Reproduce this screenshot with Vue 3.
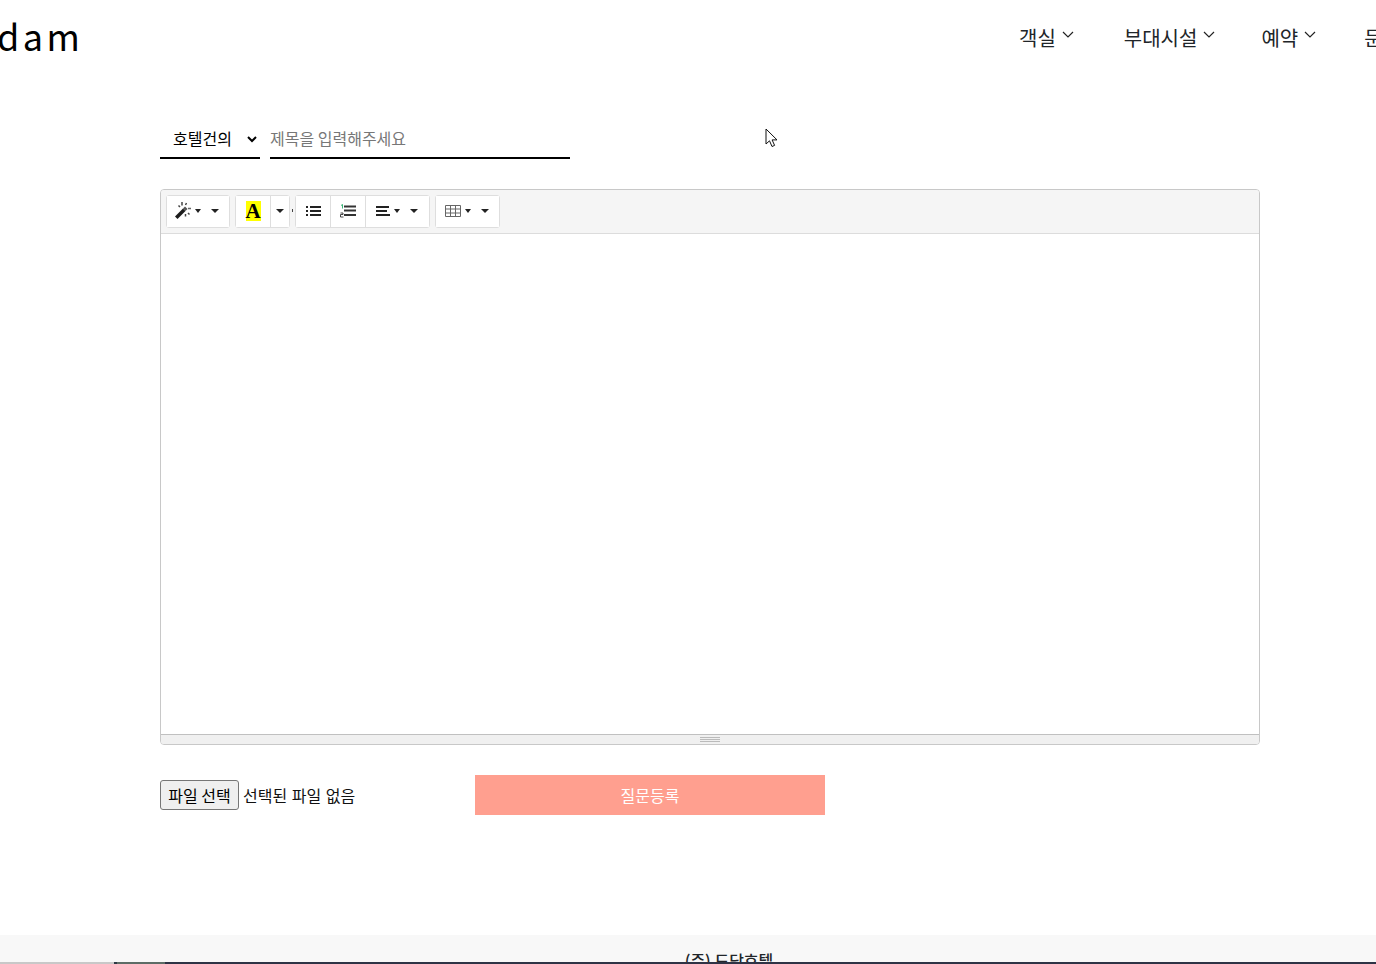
<script setup>
const nav = [
  { label: '객실', gap: 50 },
  { label: '부대시설', gap: 46 },
  { label: '예약', gap: 48 },
]
</script>

<template>
  <div class="page">
    <header class="header">
      <div class="logo">dam</div>
      <nav class="nav">
        <a v-for="item in nav" :key="item.label" class="nav-item" :style="{ marginRight: item.gap + 'px' }">
          <span>{{ item.label }}</span>
          <svg class="chev" width="12" height="7" viewBox="0 0 12 7"><path d="M1 1l5 5 5-5" fill="none" stroke="#222" stroke-width="1.2" /></svg>
        </a>
        <a class="nav-item">문의</a>
      </nav>
    </header>

    <main class="main">
      <div class="title-row">
        <select class="kind">
          <option>호텔건의</option>
        </select>
        <input class="title" type="text" placeholder="제목을 입력해주세요" />
      </div>

      <section class="editor">
        <div class="toolbar">
          <div class="group">
            <button class="tb w64 p8">
              <svg width="16" height="17" viewBox="0 0 16 17">
                <path d="M0 14.500L8 6.500l2.500 2.500L2.500 17z" fill="#1c1c1c" />
                <path d="M8 6.500l2-2 2.500 2.500-2 2z" fill="#555" />
                <path d="M7 0v3.500M3.500 3.500l1.500 1.500M11.500 1l-1 2M13 11l1.500 1.500M10.500 12v2.500" stroke="#444" stroke-width="1.500" />
                <path d="M13 6.500h3" stroke="#666" stroke-width="1.500" />
              </svg>
              <i class="caret small"></i>
              <i class="caret ml"></i>
            </button>
          </div>
          <div class="group">
            <button class="tb w35"><span class="hl">A</span></button>
            <button class="tb w19"><i class="caret"></i></button>
          </div>
          <span class="stray"></span>
          <div class="group">
            <button class="tb w35">
              <svg width="15" height="12" viewBox="0 0 15 12"><path d="M4 2h11M4 6h11M4 10h11" stroke="#222" stroke-width="1.800" /><path d="M0 2h2M0 6h2M0 10h2" stroke="#222" stroke-width="2.200" /></svg>
            </button>
            <button class="tb w35">
              <svg width="16" height="14" viewBox="0 0 16 14"><path d="M4 2.500h12M4 6.500h12M4 11h12" stroke="#333" stroke-width="1.800" /><path d="M1 1.500l1.500-1v4" fill="none" stroke="#2a6" stroke-width=".9" /><path d="M.5 9h2.500v1.500H.5V13h3" fill="none" stroke="#333" stroke-width=".9" /></svg>
            </button>
            <button class="tb w63 p10">
              <svg width="14" height="10" viewBox="0 0 14 10"><path d="M0 1h13M0 5h11M0 9h14" stroke="#222" stroke-width="1.900" /></svg>
              <i class="caret small"></i>
              <i class="caret ml"></i>
            </button>
          </div>
          <div class="group">
            <button class="tb w63 p9">
              <svg width="16" height="12" viewBox="0 0 16 12"><path d="M.5.500h15v11H.5zM.5 4h15M.5 8h15M5.500.500v11M10.500.500v11" fill="none" stroke="#666" stroke-width="1" /></svg>
              <i class="caret small"></i>
              <i class="caret ml"></i>
            </button>
          </div>
        </div>
        <div class="canvas"></div>
        <div class="resizer"><span class="grip"></span></div>
      </section>

      <div class="actions">
        <div class="file">
          <button class="file-btn">파일 선택</button>
          <span class="file-name">선택된 파일 없음</span>
        </div>
        <button class="submit">질문등록</button>
      </div>
    </main>

    <footer class="footer">(주) 도담호텔</footer>

    <svg class="cursor" width="14" height="20" viewBox="0 0 14 20">
      <path d="M1 1v15l3.500-3.200 2.500 5.700 2.600-1.100-2.500-5.500H12z" fill="#fff" stroke="#111" stroke-width="1" />
    </svg>
    <div class="strip"><span class="s1"></span><span class="s2"></span><span class="s3"></span></div>
  </div>
</template>

<style>
html, body { margin: 0; padding: 0; background: #fff; overflow: hidden; }
</style>

<style scoped>
.page {
  position: relative;
  width: 1376px;
  height: 964px;
  overflow: hidden;
  background: #fff;
  font-family: "Noto Sans CJK KR", "Noto Sans", sans-serif;
  color: #212529;
}
.header {
  height: 76px;
  display: flex;
  justify-content: space-between;
  align-items: flex-start;
}
.logo {
  margin-left: -3px;
  font-family: "Noto Sans CJK KR", sans-serif;
  font-size: 36px;
  font-weight: 400;
  line-height: 70px;
  letter-spacing: 3.500px;
  color: #000;
}
.nav {
  display: flex;
  width: 357px;
  flex: none;
  margin-top: 24px;
  white-space: nowrap;
  font-size: 20px;
  color: #212529;
}
.nav-item { display: flex; align-items: flex-start; line-height: 28px; flex: none; }
.chev { margin: 7px 0 0 6px; }
.main { padding: 44px 0 0 160px; width: 1100px; }
.title-row { display: flex; gap: 10px; height: 39px; }
.kind {
  width: 100px;
  height: 39px;
  box-sizing: border-box;
  border: 0;
  border-bottom: 2px solid #000;
  background: #fff;
  padding: 0 2px 2px 9px;
  font: 16px "Noto Sans CJK KR", sans-serif;
  color: #000;
  outline: 0;
}
.title {
  width: 300px;
  height: 39px;
  box-sizing: border-box;
  border: 0;
  border-bottom: 2px solid #000;
  padding: 0 0 2px;
  font: 16px "Noto Sans CJK KR", sans-serif;
  outline: 0;
}
.title::placeholder { color: #777; opacity: 1; }
.editor {
  margin-top: 30px;
  width: 1100px;
  height: 556px;
  box-sizing: border-box;
  border: 1px solid #c8c8c8;
  border-radius: 4px;
  display: flex;
  flex-direction: column;
  overflow: hidden;
}
.toolbar {
  height: 44px;
  box-sizing: border-box;
  background: #f5f5f5;
  border-bottom: 1px solid #dcdcdc;
  padding: 5px;
  display: flex;
  gap: 5px;
}
.group { display: flex; height: 33px; box-sizing: border-box; border: 1px solid #dedede; border-radius: 3px; background: #fff; }
.stray { width: 1px; height: 3px; margin: 14px -3px 0; background: #444; }
.tb {
  height: 31px;
  padding: 0 0 2px;
  border: 0;
  border-right: 1px solid #dedede;
  background: #fff;
  display: flex;
  align-items: center;
  justify-content: center;
  box-sizing: border-box;
}
.tb:last-child { border-right: 0; }
.w64, .w63 { justify-content: flex-start; }
.w64 { width: 62px; }
.w63 { width: 63px; }
.p8 { padding-left: 8px; }
.p9 { padding-left: 9px; }
.p10 { padding-left: 10px; }
.w35 { width: 35px; }
.w19 { width: 18px; }
.hl {
  display: block;
  width: 15px;
  height: 20px;
  background: #ff0;
  color: #000;
  font: bold 21px/21px "Liberation Serif", serif;
  text-align: center;
}
.caret {
  display: block;
  width: 0;
  height: 0;
  border-left: 4px solid transparent;
  border-right: 4px solid transparent;
  border-top: 4px solid #222;
}
.caret.small { margin-left: 4px; border-left-width: 3.500px; border-right-width: 3.500px; }
.caret.ml { margin-left: 10px; }
.canvas { flex: 1; background: #fff; }
.resizer {
  height: 10px;
  box-sizing: border-box;
  background: #f0f0f0;
  border-top: 1px solid #c0c0c0;
  display: flex;
  justify-content: center;
  padding-top: 2px;
}
.grip {
  width: 20px;
  height: 5px;
  border-top: 1px solid #bbb;
  border-bottom: 1px solid #bbb;
  background: linear-gradient(#f0f0f0 0 1px, #bbb 1px 2px, #f0f0f0 2px);
  box-sizing: border-box;
}
.actions { display: flex; align-items: center; margin-top: 30px; height: 40px; }
.file { display: flex; align-items: center; width: 315px; font-size: 16px; line-height: 22px; color: #111; }
.file-btn {
  width: 79px;
  height: 30px;
  padding: 0 0 1px;
  box-sizing: border-box;
  border: 1px solid #767676;
  border-radius: 3px;
  background: #efefef;
  font: 16px "Noto Sans CJK KR", sans-serif;
  color: #000;
}
.file-name { margin-left: 4px; padding-bottom: 1px; word-spacing: 1px; }
.submit {
  width: 350px;
  height: 40px;
  border: 0;
  padding: 0;
  background: #ff9f8f;
  color: #fff;
  font: 16px "Noto Sans CJK KR", sans-serif;
}
.footer {
  margin-top: 120px;
  height: 40px;
  background: #f8f8f8;
  text-align: center;
  font-size: 16px;
  font-weight: 500;
  line-height: 20px;
  padding: 15px 0 0 82px;
  box-sizing: border-box;
}
.cursor { position: absolute; left: 765px; top: 128px; }
.strip { position: absolute; left: 0; right: 0; bottom: 0; height: 2px; display: flex; background: #2e3345; }
.s1 { width: 114px; background: #c8c8c8; }
.s2 { width: 3px; background: #2e3a45; }
.s3 { width: 48px; background: #5d6c66; }
</style>
